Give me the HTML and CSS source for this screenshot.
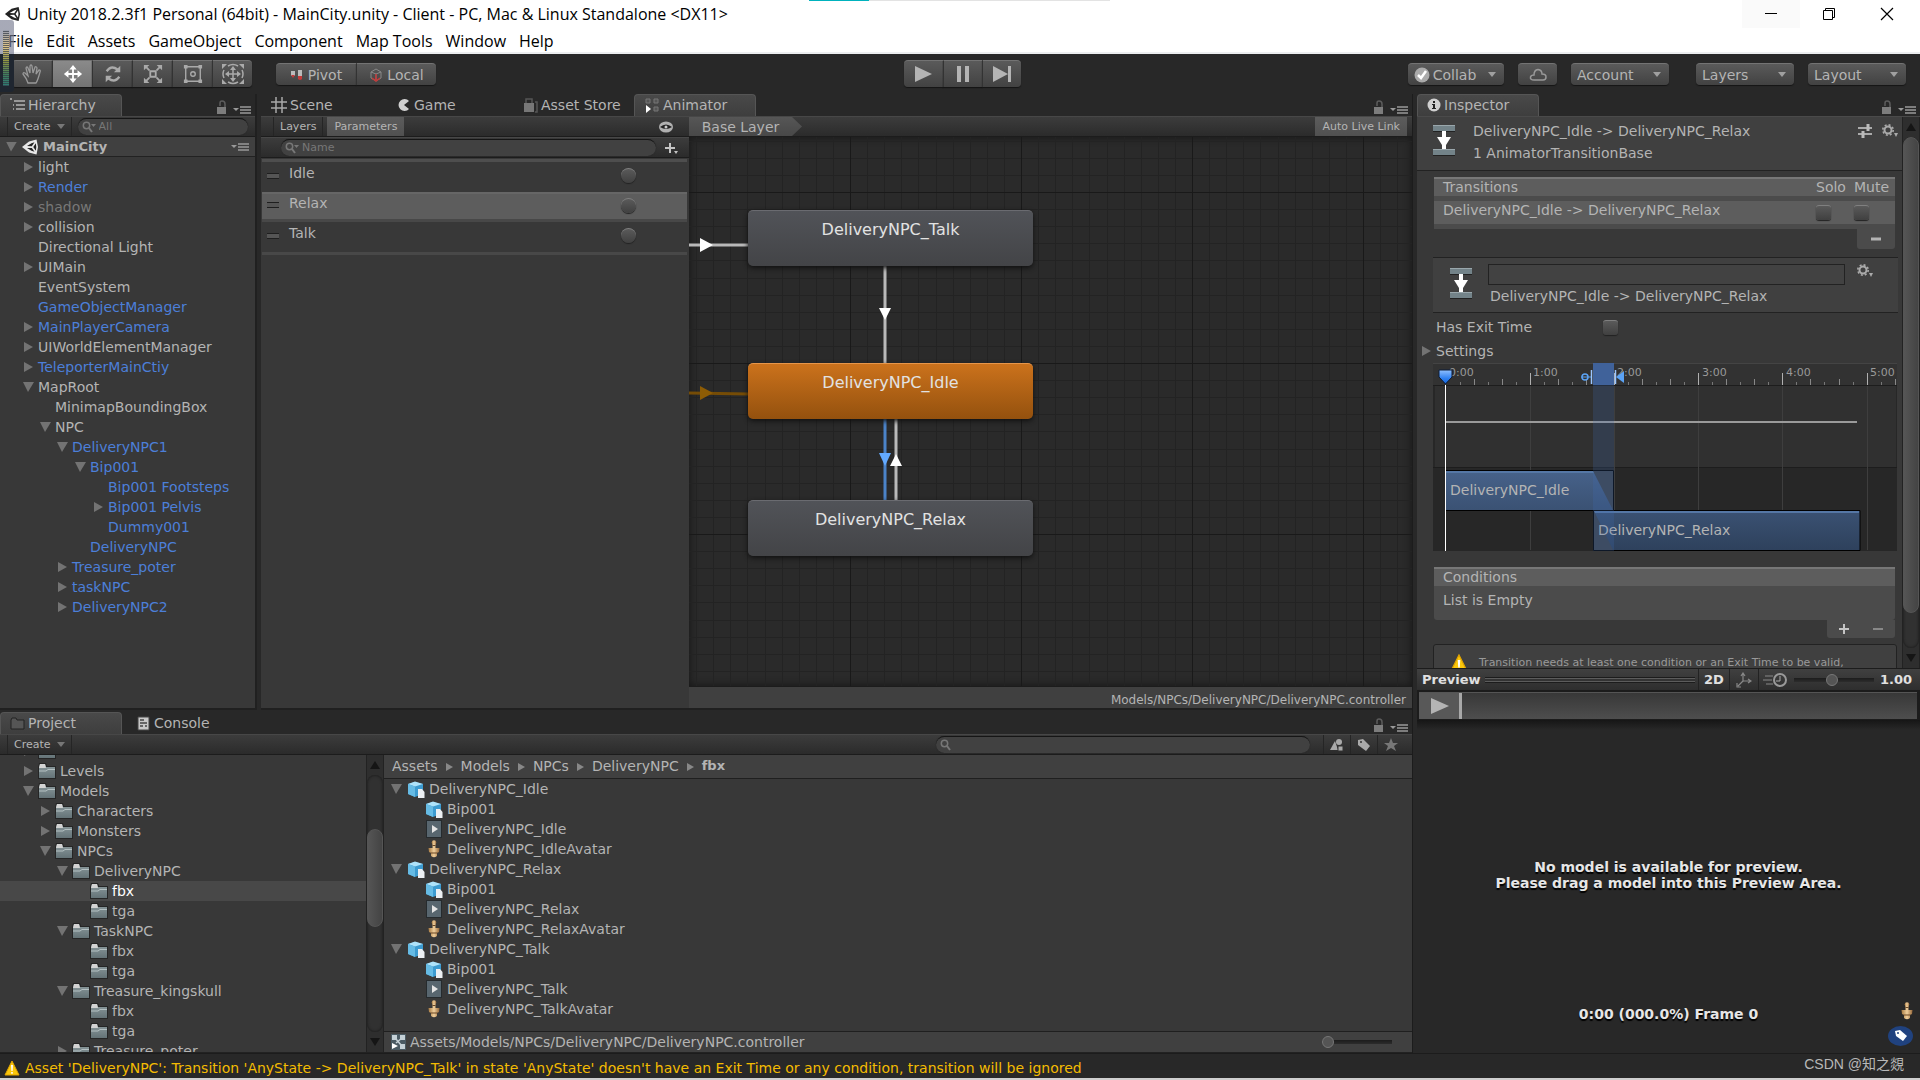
FILE: index.html
```
<!DOCTYPE html>
<html lang="en">
<head>
    <meta charset="utf-8">
    <title>Unity 2018.2.3f1 Personal (64bit) - MainCity.unity</title>
    <link rel="stylesheet" href="styles.css">
</head>
<body>

<!-- shared icons -->
<svg class="defs" width="0" height="0">
    <defs>
        <linearGradient id="g-folder" x1="0" y1="0" x2="0" y2="1"><stop offset="0" stop-color="#8d9b9e"/><stop offset="1" stop-color="#647377"/></linearGradient>
        <linearGradient id="g-wood" x1="0" y1="0" x2="1" y2="0"><stop offset="0" stop-color="#a77a42"/><stop offset=".5" stop-color="#f0cf9c"/><stop offset="1" stop-color="#96683a"/></linearGradient>
        <linearGradient id="g-clip" x1="0" y1="0" x2="0" y2="1"><stop offset="0" stop-color="#47628a"/><stop offset="1" stop-color="#2e415c"/></linearGradient>
        <linearGradient id="g-pin" x1="0" y1="0" x2="0" y2="1"><stop offset="0" stop-color="#8fc0ff"/><stop offset=".6" stop-color="#2f80f0"/><stop offset="1" stop-color="#1664d8"/></linearGradient>
    </defs>
    <symbol id="i-unity" viewBox="0 0 18 18">
        <path d="M1 9 8 3.500 15.500 1.500 17 9 15.500 16.500 8 14.500Z" fill="currentColor"/>
        <path d="M6 8 10.500 5.200 13.500 4.200 10.800 8.200ZM6 10 10.800 9.900 13.500 13.800 10.500 12.800ZM12.300 9 14.800 5.200 15.300 9 14.800 12.800Z" fill="var(--cut)"/>
    </symbol>
    <symbol id="i-folder" viewBox="0 0 18 16">
        <path d="M0 4 1 0H8L9 3H18V16H0Z" fill="#252525"/>
        <path d="M1 4 2 1H7L8 4H17V15H1Z" fill="url(#g-folder)"/>
        <path d="M2 1H7L8 5H1Z" fill="#d3d3d3"/>
        <path d="M1 8H8L10 6.500H17" fill="none" stroke="#b4c0c2" stroke-width="1"/>
    </symbol>
    <symbol id="i-cube" viewBox="0 0 18 17">
        <path d="M1 3 8 1 16 3V13L8 16 1 13Z" fill="#3c9bd0"/>
        <path d="M1 3 8 .500 16 3 8 5.500Z" fill="#aee3fa"/>
        <path d="M1 3 8 5.500V16L1 13Z" fill="#66bbe4"/>
        <path d="M11 8H15L17.500 11V17H11Z" fill="#eceff2"/>
    </symbol>
    <symbol id="i-clip" viewBox="0 0 16 18">
        <path d="M0 0H16V18H0Z" fill="#262b2e"/>
        <path d="M1 1H15V17H1Z" fill="#58666f"/>
        <path d="M6 5 12 9 6 13Z" fill="#e4e4e4"/>
    </symbol>
    <symbol id="i-avatar" viewBox="0 0 12 18">
        <circle cx="6" cy="2.500" r="2.300" fill="url(#g-wood)"/>
        <path d="M4.500 4H7.500V8H11.500L11 12 9 13V16Q6 18.500 3 16V13L1 12 .500 8H4.500Z" fill="url(#g-wood)"/>
        <path d="M2.500 13H9.500M4.500 5.500H7.500" stroke="#6a4724"/>
    </symbol>
    <symbol id="i-lock" viewBox="0 0 10 14">
        <path d="M3 6V3Q3 1 5 1 8 1 8 4V7" fill="none" stroke="#5c5c5c" stroke-width="1.500"/>
        <path d="M0 7H9V14H0Z" fill="#7d7d7d"/>
    </symbol>
    <symbol id="i-menu" viewBox="0 0 18 8">
        <path d="M0 2H6L3 5Z" fill="#999"/>
        <path d="M7 1H18M7 4H18M7 7H18" stroke="#999" stroke-width="1.500"/>
    </symbol>
    <symbol id="i-trans" viewBox="0 0 22 32">
        <path d="M0 1H22V7H0ZM0 25H22V31H0Z" fill="#738389"/>
        <path d="M0 1.500H22M0 25.500H22" stroke="#9aa7ac"/>
        <path d="M0 7.500H22M0 31.500H22" stroke="#222"/>
        <path d="M9 7H13V13H18L13 21V25H9V21L4 13H9Z" fill="#fff"/>
    </symbol>
    <symbol id="i-gear" viewBox="0 0 16 14">
        <circle cx="6" cy="6" r="3.500" fill="none" stroke="#aaa" stroke-width="2"/>
        <circle cx="6" cy="6" r="5.200" fill="none" stroke="#aaa" stroke-width="1.600" stroke-dasharray="2 2.080"/>
        <path d="M12 9H16L14 13Z" fill="#aaa"/>
    </symbol>
    <symbol id="i-search" viewBox="0 0 16 12">
        <circle cx="4.500" cy="4.500" r="3.200" fill="none" stroke="#777" stroke-width="1.500"/>
        <path d="M7 7 10 11" stroke="#777" stroke-width="2"/>
        <path d="M9 3H14L11.500 6Z" fill="#777"/>
    </symbol>
    <symbol id="i-warn" viewBox="0 0 16 16">
        <path d="M8 1 15 15H1Z" fill="#fbc70c" stroke="#e0a400"/>
        <path d="M7 5H9L8.600 11H7.400ZM7.200 12H8.800V13.800H7.200Z" fill="#fff"/>
    </symbol>
</svg>

<header class="titlebar">
    <svg class="unity-logo" width="17" height="18"><use href="#i-unity"/></svg>
    <span class="title">Unity 2018.2.3f1 Personal (64bit) - MainCity.unity - Client - PC, Mac &amp; Linux Standalone &lt;DX11&gt;</span>
    <div class="window-buttons">
        <button class="window-button hover" aria-label="Minimize"><svg width="14" height="14"><path d="M1 6.500H13" stroke="#000"/></svg></button>
        <button class="window-button" aria-label="Restore"><svg width="14" height="14"><path d="M1.500 3.500H10.500V12.500H1.500ZM3.500 3.500V1.500H12.500V10.500H10.500" fill="none" stroke="#000"/></svg></button>
        <button class="window-button" aria-label="Close"><svg width="14" height="14"><path d="M1 1 13 13M13 1 1 13" stroke="#000" stroke-width="1.200"/></svg></button>
    </div>
</header>
<div class="progress"><span class="progress-fill"></span></div>

<nav class="menubar">
    <button>File</button>
    <button>Edit</button>
    <button>Assets</button>
    <button>GameObject</button>
    <button>Component</button>
    <button>Map Tools</button>
    <button>Window</button>
    <button>Help</button>
</nav>
<div class="meter"><span class="meter-bars"></span></div>

<div class="toolbar">
    <div class="toolbar-left">
        <div class="group tools">
            <button class="tool" aria-label="Hand"><svg width="22" height="22" fill="none" stroke="#999" stroke-width="1.300"><path d="M7 20Q6 16 2 11Q2 9 4 10L7 13 5 5Q6 3 7 5L9 10 9 3Q10 1 11 3L12 10 14 4Q15 3 16 5L15 11 18 7Q20 7 19 9Q17 17 15 20Z"/></svg></button>
            <button class="tool on" aria-label="Move"><svg width="20" height="20" viewBox="0 0 22 22"><path d="M11 1 15 6H12V10H16V7L21 11 16 15V12H12V16H15L11 21 7 16H10V12H6V15L1 11 6 7V10H10V6H7Z" fill="#fff"/></svg></button>
            <button class="tool" aria-label="Rotate"><svg width="20" height="20" viewBox="0 0 22 22" fill="none" stroke="#aaa" stroke-width="2.500"><path d="M4 8Q9 1 16 6M18 14Q13 21 6 16"/><path d="M19 2V9H12ZM3 20V13H10Z" fill="#aaa" stroke="none"/></svg></button>
            <button class="tool" aria-label="Scale"><svg width="22" height="20" viewBox="0 0 22 22" fill="none" stroke="#aaa" stroke-width="2"><path d="M8 8H14V14H8ZM7 7 3 3M15 7 19 3M7 15 3 19M15 15 19 19"/><path d="M1 1H7L1 7ZM21 1H15L21 7ZM1 21H7L1 15ZM21 21H15L21 15Z" fill="#aaa" stroke="none"/></svg></button>
            <button class="tool" aria-label="Rect"><svg width="22" height="20" viewBox="0 0 22 22" fill="none" stroke="#aaa" stroke-width="1.500"><path d="M3 3H19V19H3Z"/><circle cx="11" cy="11" r="2.500"/><path d="M1 1H5V5H1ZM17 1H21V5H17ZM1 17H5V21H1ZM17 17H21V21H17Z" fill="#aaa" stroke="none"/></svg></button>
            <button class="tool" aria-label="Transform"><svg width="24" height="22" fill="none" stroke="#aaa" stroke-width="1.500"><path d="M12 5V17M6 11H18M3 7Q1 11 3 15M21 7Q23 11 21 15M7 3Q12 0 17 3M7 19Q12 22 17 19"/><path d="M12 3 15 7H9ZM12 19 15 15H9ZM4 11 8 8V14ZM20 11 16 8V14ZM1 1H6L1 6ZM23 1H18L23 6ZM1 21H6L1 16ZM23 21H18L23 16Z" fill="#aaa" stroke="none"/></svg></button>
        </div>
        <div class="group pivots">
            <button class="pivot"><svg width="14" height="12"><path d="M1 2H5V7H1ZM8 1H12V8H8Z" fill="#bbb"/><path d="M1 6H5L3 9ZM8 7H12V10Q10 12 8 10Z" fill="#c23a3a"/></svg>Pivot</button>
            <button class="pivot"><svg width="14" height="14"><path d="M7 1 12 4V10L7 13 2 10V4ZM2 4 7 6 12 4M7 6V13" fill="none" stroke="#888"/><path d="M7 6V12M3 10 7 13 11 10" fill="none" stroke="#c23a3a" stroke-width="1.500"/></svg>Local</button>
        </div>
    </div>
    <div class="group playback">
        <button class="play" aria-label="Play"><svg width="20" height="18"><path d="M2 1 19 9 2 17Z" fill="#b4b4b4"/></svg></button>
        <button class="play" aria-label="Pause"><svg width="20" height="18"><path d="M4 1H8V17H4ZM12 1H16V17H12Z" fill="#b4b4b4"/></svg></button>
        <button class="play" aria-label="Step"><svg width="20" height="18"><path d="M1 1 16 9 1 17ZM16 1H19V17H16Z" fill="#b4b4b4"/></svg></button>
    </div>
    <div class="services">
        <button class="popup collab"><svg width="16" height="16"><circle cx="8" cy="8" r="7.500" fill="#aaa"/><path d="M4 8 7 11 12 4" fill="none" stroke="#fff" stroke-width="2.500"/></svg>Collab<i class="caret"></i></button>
        <button class="popup cloud" aria-label="Services"><svg width="18" height="13"><path d="M5 12Q1 12 1.500 9 2 7 5 7 5 2 9 1.500 13 2 13 6 17 6 17 9 17 12 14 12Z" fill="none" stroke="#999" stroke-width="1.500"/></svg></button>
        <label class="popup"><select aria-label="Account"><option>Account</option></select><i class="caret"></i></label>
        <label class="popup wide-gap"><select aria-label="Layers"><option>Layers</option></select><i class="caret"></i></label>
        <label class="popup"><select aria-label="Layout"><option>Layout</option></select><i class="caret"></i></label>
    </div>
</div>

<main class="workspace">
    <div class="left">
        <div class="upper">
            <section class="panel hierarchy">
                <div class="tabs">
                    <button class="tab active"><svg width="16" height="14"><path d="M5 3H16M7 7H16M7 11H16M1 1H3M4 7H5M4 11H5" stroke="#b4b4b4" stroke-width="1.500"/></svg>Hierarchy</button>
                    <span class="tab-tools"><svg width="10" height="14"><use href="#i-lock"/></svg><svg width="18" height="8"><use href="#i-menu"/></svg></span>
                </div>
                <div class="bar">
                    <button class="bar-button create">Create<i class="caret"></i></button>
                    <label class="search all"><svg width="16" height="12"><use href="#i-search"/></svg><input placeholder="All" aria-label="Search hierarchy"></label>
                </div>
                <div class="scene-row"><i class="arrow open"></i><svg class="scene-logo" width="18" height="18"><use href="#i-unity"/></svg><b>MainCity</b><svg class="scene-menu" width="18" height="8"><use href="#i-menu"/></svg></div>
                <ul class="tree">
                    <li class="d1"><i class="arrow"></i>light</li>
                    <li class="d1 prefab"><i class="arrow"></i>Render</li>
                    <li class="d1 off"><i class="arrow"></i>shadow</li>
                    <li class="d1"><i class="arrow"></i>collision</li>
                    <li class="d1"><i class="arrow none"></i>Directional Light</li>
                    <li class="d1"><i class="arrow"></i>UIMain</li>
                    <li class="d1"><i class="arrow none"></i>EventSystem</li>
                    <li class="d1 prefab"><i class="arrow none"></i>GameObjectManager</li>
                    <li class="d1 prefab"><i class="arrow"></i>MainPlayerCamera</li>
                    <li class="d1"><i class="arrow"></i>UIWorldElementManager</li>
                    <li class="d1 prefab"><i class="arrow"></i>TeleporterMainCtiy</li>
                    <li class="d1"><i class="arrow open"></i>MapRoot</li>
                    <li class="d2"><i class="arrow none"></i>MinimapBoundingBox</li>
                    <li class="d2"><i class="arrow open"></i>NPC</li>
                    <li class="d3 prefab"><i class="arrow open"></i>DeliveryNPC1</li>
                    <li class="d4 prefab"><i class="arrow open"></i>Bip001</li>
                    <li class="d5 prefab"><i class="arrow none"></i>Bip001 Footsteps</li>
                    <li class="d5 prefab"><i class="arrow"></i>Bip001 Pelvis</li>
                    <li class="d5 prefab"><i class="arrow none"></i>Dummy001</li>
                    <li class="d4 prefab"><i class="arrow none"></i>DeliveryNPC</li>
                    <li class="d3 prefab"><i class="arrow"></i>Treasure_poter</li>
                    <li class="d3 prefab"><i class="arrow"></i>taskNPC</li>
                    <li class="d3 prefab"><i class="arrow"></i>DeliveryNPC2</li>
                </ul>
            </section>

            <section class="panel animator">
                <div class="tabs">
                    <button class="tab"><svg width="16" height="16"><path d="M5 0V16M11 0V16M0 5H16M0 11H16" stroke="#a8a8a8" stroke-width="1.500"/></svg>Scene</button>
                    <button class="tab"><svg width="14" height="14"><path d="M12 3A6 6 0 1 0 12 11L7 7Z" fill="#d0d0d0"/></svg>Game</button>
                    <button class="tab store"><svg width="15" height="15"><path d="M1 5H11V14H1Z" fill="#777"/><path d="M3 5V1H9V5M12 4H14V14H12" fill="none" stroke="#555" stroke-width="1.500"/></svg>Asset Store</button>
                    <button class="tab active"><svg width="16" height="15"><path d="M2 1H6V5H2ZM10 1H14V5H10ZM10 9H14V13H10Z" fill="#555" stroke="#777"/><path d="M2 7 7 11 2 15Z" fill="#fff"/></svg>Animator</button>
                    <span class="tab-tools"><svg width="10" height="14"><use href="#i-lock"/></svg><svg width="18" height="8"><use href="#i-menu"/></svg></span>
                </div>
                <div class="animator-body">
                    <div class="params">
                        <div class="bar">
                            <button class="bar-button layers">Layers</button>
                            <button class="bar-button on">Parameters</button>
                            <svg class="eye" width="14" height="12"><ellipse cx="7" cy="6" rx="7" ry="5.500" fill="#b0b0b0"/><path d="M1 6Q7 1 13 6Q7 10 1 6Z" fill="#222"/><circle cx="7" cy="6" r="1.500" fill="#ccc"/></svg>
                        </div>
                        <div class="bar">
                            <label class="search name"><svg width="16" height="12"><use href="#i-search"/></svg><input placeholder="Name" aria-label="Search parameters"></label>
                            <button class="icon-button" aria-label="Add parameter"><svg width="14" height="14"><path d="M6 2V12M1 7H11" stroke="#c4c4c4" stroke-width="2"/><path d="M10 10H14L12 13Z" fill="#c4c4c4"/></svg></button>
                        </div>
                        <ul class="param-list">
                            <li><i class="grip"></i><label for="p-idle">Idle</label><input type="radio" id="p-idle"></li>
                            <li class="selected"><i class="grip"></i><label for="p-relax">Relax</label><input type="radio" id="p-relax"></li>
                            <li><i class="grip"></i><label for="p-talk">Talk</label><input type="radio" id="p-talk"></li>
                        </ul>
                    </div>
                    <div class="graph-side">
                        <div class="bar">
                            <button class="crumb-layer">Base Layer</button>
                            <button class="bar-button on live">Auto Live Link</button>
                        </div>
                        <div class="graph">
                            <svg class="links" width="100%" height="100%">
                                <defs>
                                    <pattern id="grid" x="161" y="55" width="171" height="171" patternUnits="userSpaceOnUse">
                                        <path d="M17.500 0V171M34.500 0V171M51.500 0V171M68.500 0V171M86.500 0V171M103.500 0V171M120.500 0V171M137.500 0V171M154.500 0V171M0 17.500H171M0 34.500H171M0 51.500H171M0 68.500H171M0 86.500H171M0 103.500H171M0 120.500H171M0 137.500H171M0 154.500H171" stroke="#232323"/>
                                        <path d="M.500 0V171M0 .500H171" stroke="#191919"/>
                                    </pattern>
                                </defs>
                                <rect width="100%" height="100%" fill="url(#grid)"/>
                                <g stroke-width="3">
                                    <path d="M0 108H60M196 128V226M207 282V363" stroke="#b9b9b9"/>
                                    <path d="M0 256 60 257" stroke="#754c06"/>
                                    <path d="M196 282V363" stroke="#4b83c8"/>
                                </g>
                                <path d="M11 101 24 108 11 115ZM190 171H202L196 183ZM201 329H213L207 317Z" fill="#fff"/>
                                <path d="M11 249 24 256 11 263Z" fill="#8d5c05"/>
                                <path d="M190 316H202L196 329Z" fill="#63aaff"/>
                            </svg>
                            <div class="node talk">DeliveryNPC_Talk</div>
                            <div class="node idle">DeliveryNPC_Idle</div>
                            <div class="node relax">DeliveryNPC_Relax</div>
                        </div>
                        <div class="graph-footer">Models/NPCs/DeliveryNPC/DeliveryNPC.controller</div>
                    </div>
                </div>
            </section>
        </div>

        <section class="panel project">
            <div class="tabs">
                <button class="tab active"><svg width="15" height="13"><path d="M1 3 2 1H6L7 3H14V12H1Z" fill="#555" stroke="#222"/></svg>Project</button>
                <button class="tab"><svg width="13" height="15"><path d="M1 1H12V14H1Z" fill="#c8c8c8" stroke="#444"/><path d="M3 4H7M3 7H10M3 10H6M8 10H10" stroke="#444" stroke-width="1.500"/></svg>Console</button>
                <span class="tab-tools"><svg width="10" height="14"><use href="#i-lock"/></svg><svg width="18" height="8"><use href="#i-menu"/></svg></span>
            </div>
            <div class="bar">
                <button class="bar-button create">Create<i class="caret"></i></button>
                <label class="search assets-search"><svg width="12" height="12" viewBox="0 0 12 12"><circle cx="4.500" cy="4.500" r="3.200" fill="none" stroke="#777" stroke-width="1.500"/><path d="M7 7 10 11" stroke="#777" stroke-width="2"/></svg><input aria-label="Search assets"></label>
                <button class="filter" aria-label="Search by type"><svg width="14" height="14"><path d="M0 12 5 3 8 12Z" fill="#aaa"/><circle cx="9" cy="4" r="3" fill="#aaa"/><path d="M8 8H13V13H8Z" fill="#aaa" stroke="#333"/></svg></button>
                <button class="filter" aria-label="Search by label"><svg width="14" height="14"><path d="M1 2 6 1 13 8 9 13 1 7Z" fill="#aaa"/><circle cx="4" cy="4" r="1" fill="#333"/></svg></button>
                <button class="filter last" aria-label="Save search"><svg width="14" height="14"><path d="M7 0 9 5H14L10 8 12 13 7 10 2 13 4 8 0 5H5Z" fill="#777"/></svg></button>
            </div>
            <div class="project-body">
                <div class="folders">
                    <ul class="tree">
                        <li class="d1"><i class="arrow"></i><svg width="18" height="16"><use href="#i-folder"/></svg></li>
                        <li class="d1"><i class="arrow"></i><svg width="18" height="16"><use href="#i-folder"/></svg>Levels</li>
                        <li class="d1"><i class="arrow open"></i><svg width="18" height="16"><use href="#i-folder"/></svg>Models</li>
                        <li class="d2"><i class="arrow"></i><svg width="18" height="16"><use href="#i-folder"/></svg>Characters</li>
                        <li class="d2"><i class="arrow"></i><svg width="18" height="16"><use href="#i-folder"/></svg>Monsters</li>
                        <li class="d2"><i class="arrow open"></i><svg width="18" height="16"><use href="#i-folder"/></svg>NPCs</li>
                        <li class="d3"><i class="arrow open"></i><svg width="18" height="16"><use href="#i-folder"/></svg>DeliveryNPC</li>
                        <li class="d4 selected"><i class="arrow none"></i><svg width="18" height="16"><use href="#i-folder"/></svg>fbx</li>
                        <li class="d4"><i class="arrow none"></i><svg width="18" height="16"><use href="#i-folder"/></svg>tga</li>
                        <li class="d3"><i class="arrow open"></i><svg width="18" height="16"><use href="#i-folder"/></svg>TaskNPC</li>
                        <li class="d4"><i class="arrow none"></i><svg width="18" height="16"><use href="#i-folder"/></svg>fbx</li>
                        <li class="d4"><i class="arrow none"></i><svg width="18" height="16"><use href="#i-folder"/></svg>tga</li>
                        <li class="d3"><i class="arrow open"></i><svg width="18" height="16"><use href="#i-folder"/></svg>Treasure_kingskull</li>
                        <li class="d4"><i class="arrow none"></i><svg width="18" height="16"><use href="#i-folder"/></svg>fbx</li>
                        <li class="d4"><i class="arrow none"></i><svg width="18" height="16"><use href="#i-folder"/></svg>tga</li>
                        <li class="d3"><i class="arrow"></i><svg width="18" height="16"><use href="#i-folder"/></svg>Treasure_poter</li>
                    </ul>
                </div>
                <div class="scrollbar folder-scroll"><i class="scroll-up"></i><div class="track"><span class="thumb"></span></div><i class="scroll-down"></i></div>
                <div class="assets">
                    <div class="breadcrumbs"><a href="#">Assets</a><i></i><a href="#">Models</a><i></i><a href="#">NPCs</a><i></i><a href="#">DeliveryNPC</a><i></i><b>fbx</b></div>
                    <ul class="tree asset-list">
                        <li class="root"><i class="arrow open"></i><svg width="18" height="17"><use href="#i-cube"/></svg>DeliveryNPC_Idle</li>
                        <li><svg width="18" height="17"><use href="#i-cube"/></svg>Bip001</li>
                        <li><svg width="18" height="18"><use href="#i-clip"/></svg>DeliveryNPC_Idle</li>
                        <li><svg width="18" height="18"><use href="#i-avatar"/></svg>DeliveryNPC_IdleAvatar</li>
                        <li class="root"><i class="arrow open"></i><svg width="18" height="17"><use href="#i-cube"/></svg>DeliveryNPC_Relax</li>
                        <li><svg width="18" height="17"><use href="#i-cube"/></svg>Bip001</li>
                        <li><svg width="18" height="18"><use href="#i-clip"/></svg>DeliveryNPC_Relax</li>
                        <li><svg width="18" height="18"><use href="#i-avatar"/></svg>DeliveryNPC_RelaxAvatar</li>
                        <li class="root"><i class="arrow open"></i><svg width="18" height="17"><use href="#i-cube"/></svg>DeliveryNPC_Talk</li>
                        <li><svg width="18" height="17"><use href="#i-cube"/></svg>Bip001</li>
                        <li><svg width="18" height="18"><use href="#i-clip"/></svg>DeliveryNPC_Talk</li>
                        <li><svg width="18" height="18"><use href="#i-avatar"/></svg>DeliveryNPC_TalkAvatar</li>
                    </ul>
                    <div class="asset-footer">
                        <svg width="15" height="16"><path d="M0 0H15V16H0Z" fill="#4a5a63"/><path d="M1 1H6V6H1ZM9 1H14V6H9ZM9 10H14V15H9Z" fill="#c4d0d6"/><path d="M5 9 11 4M5 5 10 11" stroke="#c4d0d6" stroke-width="1.500"/><path d="M1 9 7 12 1 15Z" fill="#fff"/></svg>
                        <span>Assets/Models/NPCs/DeliveryNPC/DeliveryNPC.controller</span>
                        <input type="range" class="zoom" min="0" max="100" value="0" aria-label="Icon size">
                    </div>
                </div>
            </div>
        </section>
    </div>

    <section class="panel inspector">
        <div class="tabs">
            <button class="tab active"><svg width="14" height="14"><circle cx="7" cy="7" r="6.500" fill="#d0d0d0"/><path d="M6 3H8V5H6ZM5 6H8V10H9V11H5V10H6V7H5Z" fill="#222"/></svg>Inspector</button>
            <span class="tab-tools"><svg width="10" height="14"><use href="#i-lock"/></svg><svg width="18" height="8"><use href="#i-menu"/></svg></span>
        </div>
        <div class="inspector-body">
            <div class="inspector-content">
                <div class="object-header">
                    <svg width="22" height="32"><use href="#i-trans"/></svg>
                    <div class="object-name"><div>DeliveryNPC_Idle -&gt; DeliveryNPC_Relax</div><div>1 AnimatorTransitionBase</div></div>
                    <svg width="14" height="14"><path d="M0 4H14M0 10H14" stroke="#aaa" stroke-width="2"/><path d="M10 0V7M5 7V14" stroke="#bbb" stroke-width="3"/></svg>
                    <svg class="gear" width="16" height="14"><use href="#i-gear"/></svg>
                </div>

                <table class="transitions">
                    <thead><tr><th>Transitions</th><th class="solo">Solo</th><th class="mute">Mute</th></tr></thead>
                    <tbody><tr>
                        <td>DeliveryNPC_Idle -&gt; DeliveryNPC_Relax</td>
                        <td class="solo"><input type="checkbox" aria-label="Solo"></td>
                        <td class="mute"><input type="checkbox" aria-label="Mute"></td>
                    </tr></tbody>
                </table>
                <div class="list-buttons"><button aria-label="Remove transition"><svg width="12" height="12"><path d="M1 6H11" stroke="#b4b4b4" stroke-width="3"/></svg></button></div>

                <div class="transition-name">
                    <svg width="22" height="32"><use href="#i-trans"/></svg>
                    <div class="transition-field"><input type="text" aria-label="Transition name"><div>DeliveryNPC_Idle -&gt; DeliveryNPC_Relax</div></div>
                    <svg class="gear" width="16" height="14"><use href="#i-gear"/></svg>
                </div>

                <div class="exit-row"><label for="exit-time">Has Exit Time</label><input type="checkbox" id="exit-time"></div>
                <div class="settings-row"><i class="arrow"></i>Settings</div>

                <svg class="timeline" width="464" height="188">
                    <rect width="464" height="188" fill="#272727"/>
                    <rect x="2" y="22" width="461" height="82" fill="#303030"/>
                    <rect width="464" height="22" fill="#323232"/>
                    <path d="M0 .500H464" stroke="#444"/>
                    <path d="M0 22.500H464M0 104.500H464" stroke="#1d1d1d"/>
                    <path d="M97.500 23V187M181.500 23V187M265.500 23V187M349.500 23V187M434.500 23V187" stroke="#3e3e3e"/>
                    <path d="M97.500 10V22M181.500 10V22M265.500 10V22M349.500 10V22M434.500 10V22" stroke="#b0b0b0"/>
                    <path d="M41.500 16V22M69.500 16V22M125.500 16V22M153.500 16V22M209.500 16V22M237.500 16V22M293.500 16V22M321.500 16V22M377.500 16V22M406.500 16V22M462.500 16V22" stroke="#888"/>
                    <path d="M27.500 19V22M55.500 19V22M83.500 19V22M111.500 19V22M139.500 19V22M195.500 19V22M223.500 19V22M251.500 19V22M279.500 19V22M307.500 19V22M335.500 19V22M363.500 19V22M391.500 19V22M420.500 19V22M448.500 19V22" stroke="#777"/>
                    <g class="ticks"><text x="16" y="13">0:00</text><text x="100" y="13">1:00</text><text x="184" y="13">2:00</text><text x="269" y="13">3:00</text><text x="353" y="13">4:00</text><text x="437" y="13">5:00</text></g>
                    <path d="M12 59H424" stroke="#9a9a9a" stroke-width="2"/>
                    <path d="M12.500 107.500H180.500V147.500H12.500ZM160.500 147.500H427V187.500H160.500Z" fill="url(#g-clip)" stroke="#000"/>
                    <path d="M13 109H180M161 149H426" stroke="#5577a5" stroke-width="2"/>
                    <path d="M160 108H180V147ZM161 148 180 187H161Z" fill="#3d434c"/>
                    <g class="clip-names"><text x="17" y="132">DeliveryNPC_Idle</text><text x="165" y="172">DeliveryNPC_Relax</text></g>
                    <rect x="160" y="0" width="21" height="22" fill="#40629a"/>
                    <rect x="160" y="22" width="21" height="166" fill="#3f6fb5" opacity=".22"/>
                    <path d="M158.500 7V21M182.500 7V21" stroke="#9cc6ff" stroke-width="1.500"/>
                    <path d="M183 14 191 8V20Z" fill="#5ba3f5"/>
                    <circle cx="152" cy="14" r="3" fill="none" stroke="#5ba3f5" stroke-width="1.500"/><path d="M148 14H158" stroke="#5ba3f5"/>
                    <path d="M12.500 22V188" stroke="#fff"/>
                    <path d="M6 7H19V14L12.500 21 6 14Z" fill="url(#g-pin)" stroke="#0c1c38"/>
                </svg>

                <div class="list-box"><div class="list-head">Conditions</div><div class="list-empty">List is Empty</div></div>
                <div class="list-buttons pair">
                    <button aria-label="Add condition"><svg width="12" height="12"><path d="M6 1V11M1 6H11" stroke="#c4c4c4" stroke-width="2"/></svg></button>
                    <button aria-label="Remove condition"><svg width="12" height="12"><path d="M1 6H11" stroke="#888" stroke-width="2"/></svg></button>
                </div>
                <div class="help-box"><svg width="20" height="24" viewBox="0 0 16 18"><use href="#i-warn" width="16" height="16"/></svg><span>Transition needs at least one condition or an Exit Time to be valid,</span></div>
            </div>
            <div class="scrollbar"><i class="scroll-up"></i><div class="track"><span class="thumb"></span></div><i class="scroll-down"></i></div>
        </div>

        <div class="preview-bar">
            <b>Preview</b><i class="drag"></i>
            <button class="mode">2D</button>
            <button class="mode pivot-mode" aria-label="Pivot"><svg width="16" height="16"><path d="M7 2V9M7 9 2 14M7 9H14M5 4 7 1 9 4M12 7 15 9 12 11M1 11V15H5" fill="none" stroke="#888" stroke-width="1.200"/></svg></button>
            <svg width="24" height="16"><path d="M2 4H10M0 8H9M3 12H10" stroke="#888"/><circle cx="17" cy="8" r="6" fill="none" stroke="#999" stroke-width="2"/><path d="M17 4V9H13" fill="none" stroke="#aaa"/></svg>
            <input type="range" class="speed" min="0" max="2" step="any" value="0.95" aria-label="Speed">
            <b>1.00</b>
        </div>
        <div class="play-bar"><button aria-label="Play preview"><svg width="20" height="18"><path d="M1 1 19 9 1 17Z" fill="#b4b4b4"/></svg></button></div>
        <div class="preview">
            <p class="message">No model is available for preview.<br>Please drag a model into this Preview Area.</p>
            <p class="frame">0:00 (000.0%) Frame 0</p>
            <div class="preview-icons">
                <svg width="12" height="18"><use href="#i-avatar"/></svg>
                <svg width="25" height="20"><ellipse cx="12.500" cy="10" rx="12.500" ry="10" fill="#20427f"/><path d="M7 5 12 4 19 10 15 15 8 10Z" fill="#fff"/><circle cx="10" cy="7" r="1" fill="#20427f"/></svg>
            </div>
        </div>
    </section>
</main>

<footer class="status">
    <svg width="16" height="16"><use href="#i-warn"/></svg>
    <span>Asset 'DeliveryNPC': Transition 'AnyState -&gt; DeliveryNPC_Talk' in state 'AnyState' doesn't have an Exit Time or any condition, transition will be ignored</span>
    <span class="watermark">CSDN @知之覢</span>
</footer>

</body>
</html>
```

FILE: styles.css
```
* {
    box-sizing: border-box;
}

body {
    margin: 0;
    height: 100vh;
    display: flex;
    flex-direction: column;
    overflow: hidden;
    background: #282828;
    color: #b4b4b4;
    font: 14px/20px "DejaVu Sans", Verdana, sans-serif;
}

button, input, select {
    font: inherit;
    color: inherit;
    margin: 0;
    padding: 0;
    border: 0;
    background: none;
}

button {
    display: flex;
    align-items: center;
    justify-content: center;
    white-space: nowrap;
}

ul {
    list-style: none;
    margin: 0;
    padding: 0;
}

svg {
    display: block;
    flex: none;
}

.defs {
    position: absolute;
}

/* window frame */
.titlebar {
    display: flex;
    align-items: center;
    height: 28px;
    flex: none;
    padding: 0 4px;
    background: #fff;
    color: #000;
    font: 16px/28px "Open Sans", "Noto Sans", sans-serif;
}

.unity-logo {
    color: #222;
    --cut: #fff;
}

.title {
    padding-left: 6px;
    white-space: nowrap;
}

.window-buttons {
    display: flex;
    margin-left: auto;
}

.window-button {
    width: 58px;
    height: 28px;
}

.window-button.hover {
    background: #fafafa;
}

.progress {
    position: absolute;
    top: 0;
    left: 809px;
    width: 301px;
    height: 1px;
    background: #e3e3e3;
}

.progress-fill {
    display: block;
    width: 20%;
    height: 1px;
    background: #00b2bd;
}

.menubar {
    display: flex;
    gap: 13px;
    height: 26px;
    flex: none;
    padding: 2px 8px 0;
    border-bottom: 2px solid #eceef0;
    background: #fff;
    color: #000;
    font: 16px/22px "Open Sans", "Noto Sans", sans-serif;
}

.meter {
    position: absolute;
    left: 0;
    top: 20px;
    width: 14px;
    height: 72px;
    padding: 10px 5px 6px 3px;
    border-radius: 0 3px 3px 0;
    background: linear-gradient(rgba(120, 124, 145, .65) 34px, #1f2630 34px);
}

.meter-bars {
    display: block;
    height: 100%;
    background: repeating-linear-gradient(transparent 0 1px, rgba(50, 58, 70, .7) 1px 2px),
        linear-gradient(#9a9fae, #e0c58a 30%, #8f9440 55%, #3f7d5c 80%, #2d7a72);
}

/* toolbar */
.toolbar {
    display: grid;
    grid-template-columns: 1fr auto 1fr;
    align-items: start;
    height: 40px;
    flex: none;
    padding: 6px 8px 0 12px;
}

.toolbar-left, .group {
    display: flex;
}

.tool, .pivot, .play, .popup {
    background: linear-gradient(#5a5a5a, #424242);
    border-top: 1px solid #737373;
    box-shadow: 0 1px 1px #151515;
}

.group button + button {
    border-left: 1px solid #333;
}

.group button:first-child {
    border-radius: 4px 0 0 4px;
}

.group button:last-child {
    border-radius: 0 4px 4px 0;
}

.tool {
    width: 40px;
    height: 27px;
}

.tool.on {
    background: linear-gradient(#8a8a8a, #747474);
}

.tools {
    width: 264px;
}

.pivots {
    padding-top: 3px;
}

.pivot {
    width: 80px;
    height: 22px;
    gap: 4px;
}

.play {
    width: 39px;
    height: 27px;
}

.services {
    display: flex;
    justify-content: flex-end;
    gap: 14px;
    padding: 3px 6px 0 0;
}

.popup {
    position: relative;
    display: flex;
    align-items: center;
    width: 98px;
    height: 22px;
    padding: 0 8px 0 6px;
    border-radius: 4px;
}

.popup select {
    appearance: none;
    flex: 1;
    min-width: 0;
}

.popup.collab {
    width: 96px;
    gap: 3px;
}

.collab .caret {
    margin-left: 9px;
}

.popup.cloud {
    width: 39px;
    padding: 0;
}

.popup.wide-gap {
    margin-left: 13px;
}

.caret {
    border: 4px solid transparent;
    border-top: 5px solid #a0a0a0;
    border-bottom: 0;
}

/* docked panels */
.workspace {
    display: flex;
    flex: 1;
    min-height: 0;
}

.left {
    display: flex;
    flex-direction: column;
    flex: 1;
    min-width: 0;
    border-right: 1px solid #1c1c1c;
    margin-right: 4px;
}

.upper {
    display: flex;
    flex: 616;
    min-height: 0;
    gap: 4px;
}

.panel {
    display: flex;
    flex-direction: column;
    min-width: 0;
    min-height: 0;
}

.tabs {
    display: flex;
    height: 22px;
    flex: none;
    background: #282828;
}

.tab {
    gap: 3px;
    justify-content: flex-start;
    width: 124px;
    padding: 0 10px;
}

.tab.active {
    width: 122px;
    padding: 0 9px 1px;
    border: 1px solid #555;
    border-bottom: 0;
    border-radius: 4px 4px 0 0;
    background: linear-gradient(#494949, #3e3e3e);
}

.tab-tools {
    display: flex;
    align-items: flex-end;
    gap: 6px;
    margin-left: auto;
    padding: 0 4px 2px 0;
}

.bar {
    display: flex;
    align-items: center;
    height: 21px;
    flex: none;
    border-top: 1px solid #474747;
    border-bottom: 1px solid #1c1c1c;
    background: linear-gradient(#3c3c3c, #2b2b2b);
}

.bar-button {
    height: 100%;
    padding: 0 6px;
    border: solid #252525;
    border-width: 0 1px;
    font-size: 11px;
}

.bar-button.on {
    padding: 0 7px;
    background: linear-gradient(#5c5c5c, #505050);
    border: 0;
}

.create {
    margin-left: 7px;
    gap: 6px;
}

.create .caret {
    border-top-color: #777;
}

.search {
    display: flex;
    align-items: center;
    gap: 1px;
    height: 17px;
    padding: 0 4px;
    border-top: 1px solid #151515;
    border-radius: 9px;
    background: #414141;
    box-shadow: 0 0 1px #222;
    font-size: 11px;
}

.search input {
    flex: 1;
    min-width: 0;
    outline: 0;
}

.search input::placeholder {
    color: #777;
}

.search.all {
    flex: 1;
    margin: 0 18px 0 6px;
}

.hierarchy {
    width: 257px;
    background: #383838;
    border-right: 2px solid #202020;
    border-bottom: 2px solid #202020;
}

.hierarchy .tab.active {
    padding-left: 8px;
}

.arrow {
    flex: none;
    width: 15px;
    height: 10px;
    background: #737373;
    clip-path: polygon(1px 0, 10px 5px, 1px 10px);
}

.arrow.open {
    clip-path: polygon(0 0, 11px 0, 5px 10px);
}

.arrow.none {
    background: none;
}

.scene-row {
    display: flex;
    align-items: center;
    height: 20px;
    flex: none;
    padding: 0 6px;
    border-bottom: 1px solid #222;
    background: #404040;
    font-size: 13px;
}

.scene-logo {
    color: #e8e8e8;
    --cut: #222;
    margin-right: 4px;
}

.scene-menu {
    margin-left: auto;
}

.tree li {
    display: flex;
    align-items: center;
    height: 20px;
    white-space: nowrap;
}

.tree svg {
    margin-right: 4px;
}

.d1 { padding-left: 23px; }
.d2 { padding-left: 40px; }
.d3 { padding-left: 57px; }
.d4 { padding-left: 75px; }
.d5 { padding-left: 93px; }

.prefab {
    color: #4c7fd9;
}

.off {
    color: #777;
}

/* animator */
.animator {
    flex: 1;
}

.animator .tab {
    width: 126px;
}

.animator .tab.store {
    width: 121px;
}

.animator .tab.active {
    width: 122px;
}

.animator-body {
    display: flex;
    flex: 1;
    min-height: 0;
    border-bottom: 2px solid #202020;
}

.params {
    width: 428px;
    background: #383838;
}

.layers {
    margin: 0 4px 0 12px;
}

.eye {
    margin: 0 16px 0 auto;
}

.search.name {
    flex: 1;
    margin: 0 8px 0 20px;
}

.icon-button {
    margin-right: 11px;
}

.param-list {
    margin: 1px 2px 0 1px;
    border-top: 3px solid #4e4e4e;
    border-bottom: 3px solid #484848;
}

.param-list li {
    display: flex;
    align-items: center;
    height: 30px;
    padding: 0 51px 3px 5px;
}

.param-list li.selected {
    border-top: 2px solid #666;
    border-bottom: 3px solid #484848;
    background: #5d5d5d;
}

.param-list label {
    flex: 1;
    padding: 0 0 5px 10px;
}

.grip {
    width: 12px;
    height: 6px;
    border: solid #1f1f1f;
    border-width: 1px 0;
    background: #555;
}

input[type="radio"], input[type="checkbox"] {
    appearance: none;
    width: 15px;
    height: 15px;
    border-top: 1px solid #808080;
    border-radius: 3px;
    background: linear-gradient(#5a5a5a, #404040);
    box-shadow: 0 1px 1px #222;
}

input[type="radio"] {
    border-radius: 50%;
}

.graph-side {
    display: flex;
    flex-direction: column;
    flex: 1;
    min-width: 0;
}

.crumb-layer {
    height: 100%;
    width: 113px;
    padding-right: 10px;
    background: linear-gradient(#565656, #484848);
    clip-path: polygon(0 0, 103px 0, 100% 50%, 103px 100%, 0 100%);
}

.live {
    margin: 0 5px 0 auto;
}

.graph {
    position: relative;
    flex: 1;
    overflow: hidden;
    background: #2a2a2a;
    box-shadow: inset 0 0 8px #151515;
}

.links {
    position: absolute;
}

/* state positions on the graph canvas */
.node {
    position: absolute;
    left: 59px;
    width: 285px;
    height: 56px;
    padding-top: 9px;
    border-top: 1px solid #6a6b70;
    border-radius: 5px;
    background: linear-gradient(#515358, #434447);
    box-shadow: 0 2px 5px #111;
    color: #e2e2e2;
    font-size: 16px;
    text-align: center;
}

.node.talk { top: 73px; }
.node.idle { top: 226px; }
.node.relax { top: 363px; }

.node.idle {
    border-color: #e6964a;
    background: linear-gradient(#cb721c, #94510e);
}

.graph-footer {
    height: 22px;
    flex: none;
    padding: 4px 6px 0;
    border-top: 1px solid #1c1c1c;
    background: #404040;
    font-size: 12px;
    line-height: 18px;
    text-align: right;
}

/* project */
.project {
    flex: 343;
}

.project .tabs {
    margin-top: 2px;
}

.project .tab:not(.active) {
    padding-left: 15px;
    gap: 4px;
}

.assets-search {
    width: 374px;
    margin-left: auto;
    margin-right: 13px;
}

.filter {
    width: 27px;
    height: 100%;
    border-left: 1px solid #252525;
}

.filter.last {
    margin-right: 8px;
}

.project-body {
    display: flex;
    flex: 1;
    min-height: 0;
    border-bottom: 1px solid #222;
    background: #383838;
}

.folders {
    width: 366px;
    overflow: hidden;
}

.folders .tree {
    margin-top: -14px;
}

.folders .tree .selected {
    background: #484848;
    color: #fff;
}

.scrollbar {
    display: flex;
    flex-direction: column;
    align-items: center;
    width: 18px;
    padding: 6px 0;
    background: #2e2e2e;
    border: solid #222;
    border-width: 0 1px;
}

.scroll-up, .scroll-down {
    border: 5px solid transparent;
    border-bottom: 8px solid #151515;
    border-top: 0;
}

.scroll-down {
    border-top: 8px solid #151515;
    border-bottom: 0;
}

.track {
    display: flex;
    flex: 1;
    width: 16px;
    margin: 6px 0;
    border-radius: 8px;
    background: #313131;
    box-shadow: inset 0 0 3px #151515;
}

.thumb {
    width: 16px;
    height: 93%;
    border: 1px solid #555;
    border-radius: 8px;
    background: linear-gradient(90deg, #555, #444);
}

.folder-scroll .thumb {
    height: 38%;
    margin-top: 54px;
}

.assets {
    display: flex;
    flex-direction: column;
    flex: 1;
    min-width: 0;
}

.breadcrumbs {
    display: flex;
    align-items: center;
    height: 24px;
    flex: none;
    gap: 7px;
    padding: 0 8px 2px;
    border-bottom: 1px solid #1f1f1f;
    background: #404040;
}

.breadcrumbs a {
    color: inherit;
    text-decoration: none;
}

.breadcrumbs i {
    margin: 3px 1px 0;
    border: 4px solid transparent;
    border-left: 7px solid #888;
    border-right: 0;
}

.breadcrumbs b {
    font-size: 13px;
}

.asset-list {
    flex: 1;
    overflow: hidden;
}

.asset-list li {
    padding-left: 41px;
}

.asset-list li.root {
    padding-left: 7px;
}

.asset-list .root .arrow {
    width: 16px;
}

.asset-footer {
    display: flex;
    align-items: center;
    gap: 4px;
    height: 21px;
    flex: none;
    padding: 0 20px 0 7px;
    border-top: 1px solid #1f1f1f;
    background: #404040;
}

input[type="range"] {
    appearance: none;
    height: 14px;
    background: linear-gradient(transparent 5px, #1c1c1c 5px, #2c2c2c 9px, transparent 9px);
}

.zoom {
    width: 70px;
    margin-left: auto;
}

input[type="range"]::-webkit-slider-thumb {
    appearance: none;
    width: 12px;
    height: 12px;
    border: 1px solid #777;
    border-radius: 50%;
    background: #555;
}

/* inspector */
.inspector {
    width: 503px;
    background: #383838;
}

.inspector-body {
    display: flex;
    flex: 552;
    min-height: 0;
    border-top: 1px solid #4a4a4a;
}

.inspector-content {
    flex: 1;
    min-width: 0;
    overflow: hidden;
}

.object-header {
    display: flex;
    align-items: flex-start;
    gap: 10px;
    height: 54px;
    padding: 7px 4px 0 16px;
    border-bottom: 1px solid #222;
    background: #404040;
}

.object-name {
    flex: 1;
    padding-left: 8px;
    margin-top: -4px;
    line-height: 22px;
}

.transitions {
    width: 461px;
    margin: 6px 0 0 17px;
    border-spacing: 0;
    background: #4b4b4b;
    border-bottom: 5px solid #4b4b4b;
}

.transitions th, .transitions td {
    padding: 0 0 0 9px;
    font-weight: normal;
    text-align: left;
}

.transitions th {
    height: 19px;
    line-height: 17px;
    border-top: 2px solid #777;
    background: #5d5d5d;
}

.transitions td {
    height: 28px;
    padding-bottom: 5px;
    line-height: 18px;
    border-top: 5px solid #4b4b4b;
    background: #5d5d5d;
}

.transitions .solo {
    width: 38px;
    padding: 0;
}

.transitions .mute {
    width: 41px;
    padding: 0;
}

.transitions input {
    display: block;
}

.list-buttons {
    display: flex;
    width: 38px;
    height: 20px;
    margin-left: 440px;
    border-radius: 0 0 3px 3px;
    background: #4b4b4b;
}

.list-buttons button {
    flex: 1;
}

.list-buttons.pair {
    width: 68px;
    height: 18px;
    margin-left: 410px;
}

.transition-name {
    display: flex;
    align-items: flex-start;
    gap: 12px;
    height: 56px;
    margin: 8px 4px 0 16px;
    padding: 6px 25px 0 17px;
    border-top: 1px solid #222;
    border-bottom: 1px solid #222;
    background: #404040;
}

.transition-name > svg:first-child {
    margin-top: 3px;
}

.transition-field {
    flex: 1;
    padding-left: 4px;
}

.transition-field input {
    display: block;
    width: 100%;
    height: 21px;
    border: 1px solid #222;
    background: #424242;
}

.transition-field div {
    padding: 1px 2px;
}

.exit-row {
    display: flex;
    align-items: center;
    height: 28px;
    padding-left: 19px;
}

.exit-row label {
    width: 167px;
    padding-bottom: 1px;
}

.settings-row {
    display: flex;
    align-items: center;
    height: 20px;
    padding-left: 4px;
}

.timeline {
    margin: 2px 0 16px 16px;
}

.ticks {
    fill: #999;
    font-size: 11px;
}

.clip-names {
    fill: #b4b4b4;
}

.list-box {
    width: 461px;
    height: 53px;
    margin-left: 17px;
    border-radius: 3px;
    background: #4b4b4b;
}

.list-head {
    height: 19px;
    padding-left: 9px;
    border-top: 2px solid #777;
    background: #5d5d5d;
    line-height: 16px;
}

.list-empty {
    padding: 4px 9px;
}

.help-box {
    display: flex;
    gap: 10px;
    width: 464px;
    height: 50px;
    margin: 6px 0 0 16px;
    padding: 8px 15px;
    border: 1px solid #222;
    border-radius: 3px;
    background: #404040;
    color: #999;
    font-size: 11px;
    white-space: nowrap;
}

.preview-bar {
    display: flex;
    align-items: center;
    height: 22px;
    flex: none;
    padding: 0 8px 0 5px;
    border-top: 1px solid #1c1c1c;
    background: linear-gradient(#404040, #2e2e2e);
    color: #e0e0e0;
    font-size: 13px;
}

.drag {
    flex: 1;
    height: 6px;
    margin: 0 3px 0 4px;
    border: solid #1c1c1c;
    border-width: 1px 0;
    background: linear-gradient(#5c5c5c 1px, #333 1px, #333 3px, #5c5c5c 3px);
}

.mode {
    width: 31px;
    height: 100%;
    border-left: 1px solid #222;
    font-weight: bold;
}

.mode.pivot-mode {
    width: 30px;
    border-right: 1px solid #222;
    margin-right: 4px;
}

.speed {
    width: 80px;
    margin: 0 6px 0 7px;
    background: linear-gradient(transparent 5px, #0c0c0c 5px, #0c0c0c 10px, transparent 10px);
}

.speed::-webkit-slider-thumb {
    border-color: #111;
    background: #333;
}

.play-bar {
    height: 30px;
    flex: none;
    padding: 2px 3px 1px 2px;
    background: #1c1c1c;
}

.play-bar button {
    width: 100%;
    height: 27px;
    padding-left: 11px;
    justify-content: flex-start;
    border-top: 1px solid #555;
    background: linear-gradient(90deg, #585858 40px, #a8a8a8 40px, #a8a8a8 43px, transparent 43px), linear-gradient(#383838, #4e4e4e);
}

.preview {
    position: relative;
    flex: 333;
    display: flex;
    flex-direction: column;
    align-items: center;
    background: linear-gradient(#161616, #282828 10px);
    color: #e6e6e6;
    font-size: 14px;
    font-weight: bold;
    line-height: 16px;
    text-align: center;
    text-shadow: 0 2px 1px #000;
}

.message {
    margin: auto 0 0;
}

.frame {
    margin: 115px 0 31px;
}

.preview-icons {
    position: absolute;
    right: 7px;
    bottom: 7px;
    display: flex;
    flex-direction: column;
    align-items: flex-end;
    gap: 6px;
}

/* status bar */
.status {
    display: flex;
    align-items: center;
    gap: 5px;
    height: 27px;
    flex: none;
    padding: 3px 16px 0 4px;
    border-top: 1px solid #1c1c1c;
    border-bottom: 2px solid #d0d0d0;
    color: #f4bc02;
    white-space: nowrap;
}

.watermark {
    align-self: flex-start;
    margin-left: auto;
    color: #b8b8b8;
    font: 14px/14px "Liberation Sans", "Noto Sans CJK SC", sans-serif;
}
```
